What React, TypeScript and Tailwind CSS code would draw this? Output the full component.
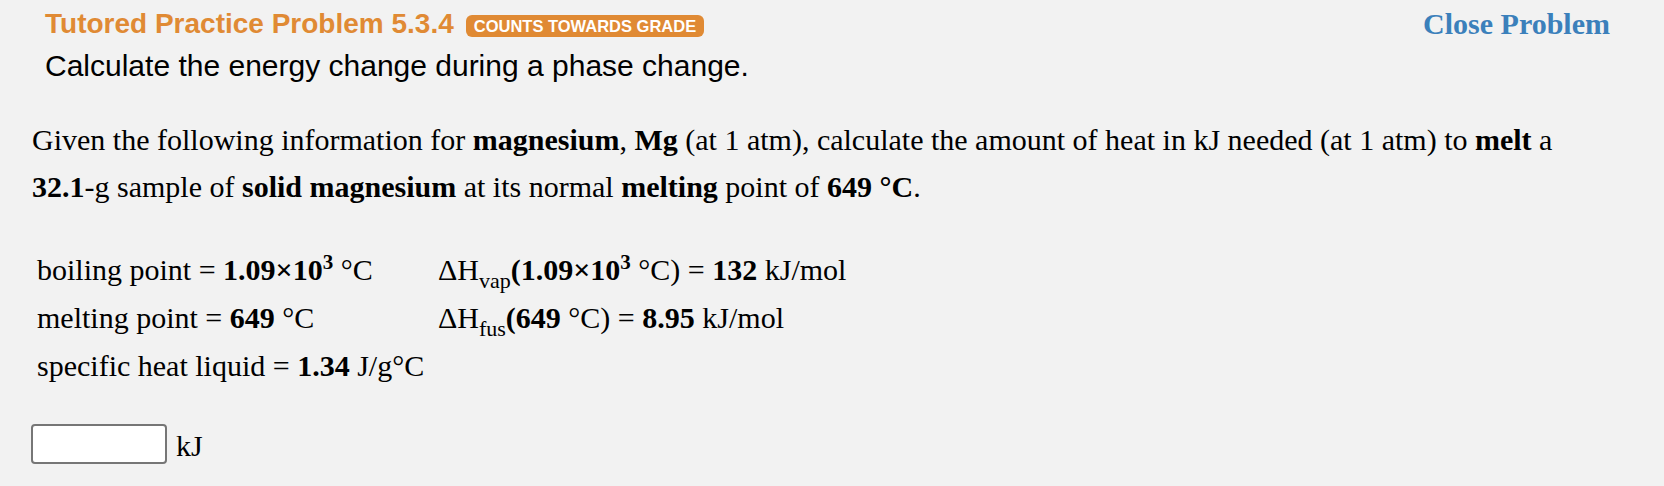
import React from 'react';

const serif = { fontFamily: '"Liberation Serif", "Times New Roman", serif' };
const sans = { fontFamily: '"Liberation Sans", Arial, sans-serif' };

const Sup = ({ children }: { children: React.ReactNode }) => (
  <span className="relative top-[-11px] text-[21px] leading-none">{children}</span>
);

const Sub = ({ children }: { children: React.ReactNode }) => (
  <span className="relative top-[8px] text-[22px] leading-none">{children}</span>
);

export default function App() {
  return (
    <div className="min-h-screen bg-[#f2f2f2] text-black">
      {/* Header */}
      <div className="flex items-start justify-between pt-[7px] pl-[45px] pr-[54px]">
        <div>
          <div className="flex items-start gap-[12px]">
            <h1 className="text-[28px] leading-[34px] font-bold text-[#e08a34]" style={sans}>
              Tutored Practice Problem 5.3.4
            </h1>
            <span
              className="mt-[8px] h-[22px] rounded-[6px] bg-[#e08a34] px-[8px] text-[16.5px] leading-[22px] font-bold text-white"
              style={sans}
            >
              COUNTS TOWARDS GRADE
            </span>
          </div>
          <p className="mt-[8px] text-[30px] leading-[34px]" style={sans}>
            Calculate the energy change during a phase change.
          </p>
        </div>
        <button className="text-[30px] leading-[34px] font-bold text-[#3b80bb]" style={serif}>
          Close Problem
        </button>
      </div>

      {/* Problem text */}
      <div className="pl-[32px] pr-[80px]" style={serif}>
        <p className="mt-[33px] text-[30px] leading-[47px]">
          Given the following information for <b>magnesium</b>, <b>Mg</b> (at 1 atm), calculate the
          amount of heat in kJ needed (at 1 atm) to <b>melt</b> a <b>32.1</b>-g sample of{' '}
          <b>solid magnesium</b> at its normal <b>melting</b> point of <b>649 °C</b>.
        </p>

        <div className="mt-[36px] grid grid-cols-[401px_1fr] pl-[5px] text-[30px] leading-[48px]">
          <div className="h-[48px] whitespace-nowrap">
            boiling point = <b>1.09×10<Sup>3</Sup></b> °C
          </div>
          <div className="h-[48px] whitespace-nowrap">
            ΔH<Sub>vap</Sub>
            <b>(1.09×10<Sup>3</Sup></b> °C) = <b>132</b> kJ/mol
          </div>
          <div className="h-[48px] whitespace-nowrap">
            melting point = <b>649</b> °C
          </div>
          <div className="h-[48px] whitespace-nowrap">
            ΔH<Sub>fus</Sub>
            <b>(649</b> °C) = <b>8.95</b> kJ/mol
          </div>
          <div className="h-[48px] whitespace-nowrap">
            specific heat liquid = <b>1.34</b> J/g°C
          </div>
          <div />
        </div>

        <div className="mt-[32px] flex items-center gap-[9px]">
          <input
            type="text"
            className="ml-[-1px] h-[40px] w-[136px] rounded-[4px] border-2 border-[#767676] bg-white"
          />
          <span className="mt-[4px] text-[30px] leading-[40px]">kJ</span>
        </div>
      </div>
    </div>
  );
}
